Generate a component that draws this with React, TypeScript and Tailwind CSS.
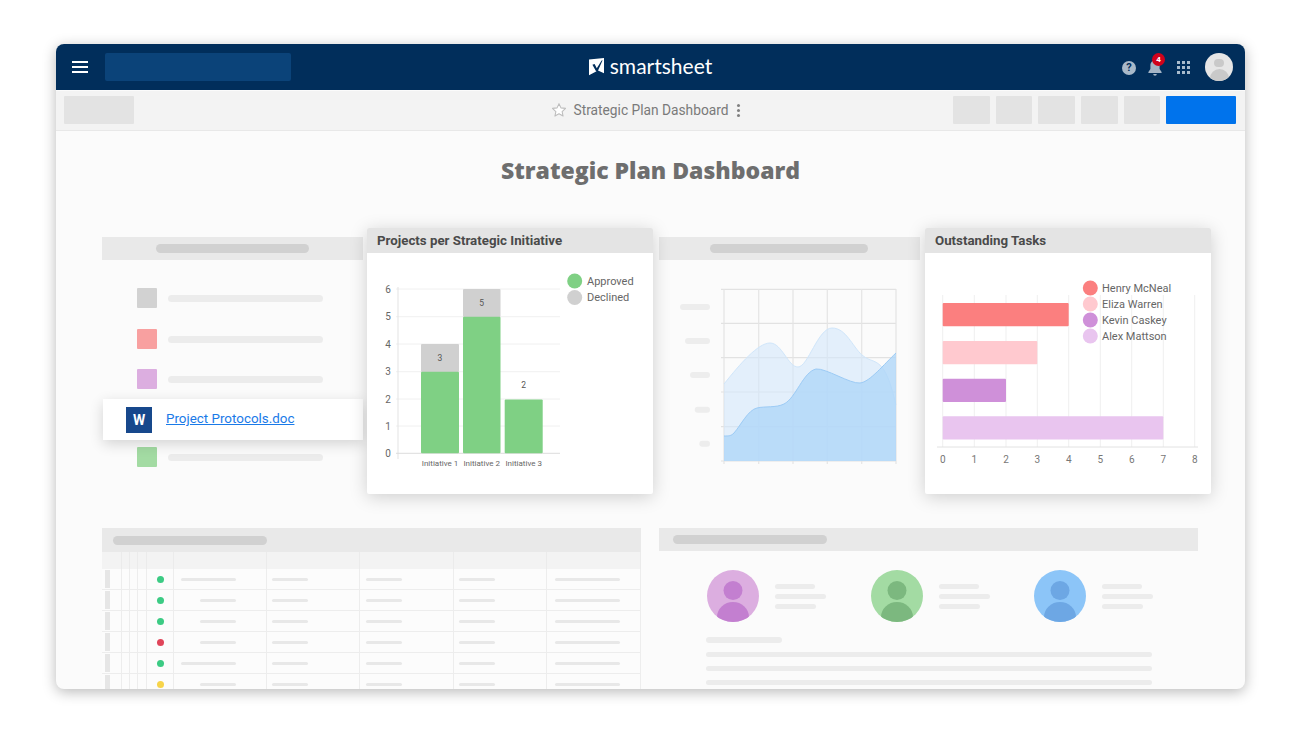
import React from 'react'

const TABLE_COLS = 'grid grid-cols-[20px_8px_8px_9px_27px_93px_93px_94px_93px_94px]'

const TABLE_ROWS = [
  { dot: 'bg-[#3ccb84]', wide: true },
  { dot: 'bg-[#3ccb84]', wide: false },
  { dot: 'bg-[#3ccb84]', wide: false },
  { dot: 'bg-[#e0455a]', wide: false },
  { dot: 'bg-[#3ccb84]', wide: true },
  { dot: 'bg-[#f7d44a]', wide: false },
]

const PEOPLE = [
  { bg: '#dcaee0', fg: '#c37fd0' },
  { bg: '#a3dba3', fg: '#7cb87f' },
  { bg: '#8cc5f8', fg: '#6da7e4' },
]

const LIGHT_CURVE = 'M724 384C740 364 758 343 770 343C782 343 788 367 798 367C808 367 818 328 832 328C846 328 852 346 862 355C870 362 877 359 884 370C890 380 893 393 896 405'
const BLUE_CURVE = 'M724 436C729 436 731 436 734 433C741 425 748 410 757 408C765 406 776 408 784 404C796 398 803 372 816 369C826 368 850 384 860 383C870 382 884 364 896 353'

function Avatar({ bg, fg, size }: { bg: string; fg: string; size: number }): React.ReactElement {
  return (
    <svg width={size} height={size} viewBox="0 0 52 52" className="shrink-0" aria-hidden="true">
      <clipPath id={`clip-${bg.slice(1)}`}>
        <circle cx="26" cy="26" r="26" />
      </clipPath>
      <circle cx="26" cy="26" r="26" fill={bg} />
      <circle cx="26" cy="20.5" r="9.5" fill={fg} />
      <ellipse cx="26" cy="47" rx="16" ry="15" fill={fg} clipPath={`url(#clip-${bg.slice(1)})`} />
    </svg>
  )
}

function SheetLogo(): React.ReactElement {
  return (
    <svg width="16" height="18" viewBox="0 0 16 18" aria-hidden="true">
      <path d="M0 1.6 15 0v15.2L9 12.4 0 17.2z" fill="#fff" />
      <path d="M3.4 6.8 5.6 6l2.2 4.2L12.6 2.4l1-.1-5 11.2h-1.4z" fill="#012e5b" />
    </svg>
  )
}

function Bell(): React.ReactElement {
  return (
    <svg width="16" height="18" viewBox="0 0 16 18" fill="#a3b4c6" aria-hidden="true">
      <path d="M8 1.5c-3 0-4.6 2.3-4.6 5v3.6L1.4 13v1h13.2v-1l-2-2.9V6.5c0-2.7-1.6-5-4.6-5z" />
      <path d="M6.2 15h3.6a1.8 1.8 0 0 1-3.6 0z" />
    </svg>
  )
}

function AppGrid(): React.ReactElement {
  return (
    <div className="grid grid-cols-3 gap-[2px]">
      {Array.from({ length: 9 }).map((_, i) => (
        <span key={i} className="w-[3px] h-[3px] bg-[#a9bbcc]" />
      ))}
    </div>
  )
}

function TopBar(): React.ReactElement {
  return (
    <header className="h-[46px] bg-[#012e5b] grid grid-cols-[1fr_auto_1fr] items-center">
      <div className="flex items-center pl-[16px]">
        <div className="flex flex-col gap-[3px] w-[16px]">
          <span className="h-[2px] bg-white" />
          <span className="h-[2px] bg-white" />
          <span className="h-[2px] bg-white" />
        </div>
        <div className="ml-[17px] w-[186px] h-[28px] rounded-[2px] bg-[#0b4379]" />
      </div>
      <div className="flex items-center gap-[5px]">
        <SheetLogo />
        <span className="-mt-[3px] font-['Lato',sans-serif] text-[21px] leading-none text-white">smartsheet</span>
      </div>
      <div className="flex items-center justify-end pr-[12px]">
        <span className="w-[14px] h-[14px] mt-[2px] rounded-full bg-[#a9b9c9] text-[#012e5b] text-[11px] font-bold leading-[14px] text-center">?</span>
        <div className="relative ml-[11px] mt-[2px]">
          <Bell />
          <span className="absolute -top-[6px] left-[5px] w-[13px] h-[13px] rounded-full bg-[#d0021b] text-white text-[8px] font-bold leading-[13px] text-center">4</span>
        </div>
        <div className="ml-[14px] mt-[1px]">
          <AppGrid />
        </div>
        <div className="ml-[15px] w-[28px] h-[28px] rounded-full bg-[#e6e6e6] overflow-hidden flex flex-col items-center">
          <span className="mt-[6px] w-[10px] h-[10px] rounded-full bg-[#c9c9c9]" />
          <span className="mt-[2px] w-[19px] h-[14px] rounded-t-full bg-[#c9c9c9]" />
        </div>
      </div>
    </header>
  )
}

function Toolbar(): React.ReactElement {
  return (
    <div className="h-[40px] mt-[1px] bg-[#f3f3f3] border-b border-[#e8e8e8] grid grid-cols-[1fr_auto_1fr] items-start pt-[5px]">
      <div className="pl-[8px]">
        <div className="w-[70px] h-[28px] rounded-[1px] bg-[#e3e3e3]" />
      </div>
      <div className="flex items-center h-[28px] pr-[11px] text-[13.75px] text-[#7a7a7a]">
        <svg width="16" height="16" viewBox="0 0 24 24" fill="#fff" stroke="#bdbdbd" strokeWidth="1.6" strokeLinejoin="round" aria-hidden="true">
          <path d="M12 2.5l2.9 6.3 6.9.8-5.1 4.7 1.4 6.8-6.1-3.4-6.1 3.4 1.4-6.8-5.1-4.7 6.9-.8z" />
        </svg>
        <span className="ml-[7px]">Strategic Plan Dashboard</span>
        <div className="ml-[8px] flex flex-col gap-[2px]">
          <span className="w-[3px] h-[3px] rounded-full bg-[#808080]" />
          <span className="w-[3px] h-[3px] rounded-full bg-[#808080]" />
          <span className="w-[3px] h-[3px] rounded-full bg-[#808080]" />
        </div>
      </div>
      <div className="flex justify-end pr-[9px] gap-[6px]">
        <div className="w-[37px] h-[28px] rounded-[1px] bg-[#e3e3e3]" />
        <div className="w-[36px] h-[28px] rounded-[1px] bg-[#e3e3e3]" />
        <div className="w-[37px] h-[28px] rounded-[1px] bg-[#e3e3e3]" />
        <div className="w-[37px] h-[28px] rounded-[1px] bg-[#e3e3e3]" />
        <div className="w-[36px] h-[28px] rounded-[1px] bg-[#e3e3e3]" />
        <div className="w-[70px] h-[28px] rounded-[1px] bg-[#0073ec]" />
      </div>
    </div>
  )
}

function PanelHeader({ pillClass }: { pillClass: string }): React.ReactElement {
  return (
    <div className="h-[23px] bg-[#e9e9e9] flex items-center">
      <div className={`h-[9px] rounded-full bg-[#d1d1d1] ${pillClass}`} />
    </div>
  )
}

function LegendRow({ square }: { square: string }): React.ReactElement {
  return (
    <div className="flex items-center pl-[35px]">
      <span className={`w-[20px] h-[20px] rounded-[1px] ${square}`} />
      <span className="ml-[11px] w-[155px] h-[7px] rounded-full bg-[#ececec]" />
    </div>
  )
}

function LeftPanel(): React.ReactElement {
  return (
    <section className="w-[261px] mt-[9px] shrink-0">
      <PanelHeader pillClass="w-[153px] ml-[54px]" />
      <div className="pt-[28px]">
        <LegendRow square="bg-[#d2d2d2]" />
        <div className="mt-[21px]"><LegendRow square="bg-[#f8a0a0]" /></div>
        <div className="mt-[20px]"><LegendRow square="bg-[#dcaee0]" /></div>
        <div className="relative z-10 mt-[10px] ml-[1px] h-[41px] bg-white shadow-[0_4px_14px_rgba(0,0,0,0.16)] flex items-center pl-[23px]">
          <span className="w-[26px] h-[26px] bg-[#17488c] text-white text-[14px] font-bold leading-[26px] text-center">W</span>
          <a className="ml-[14px] text-[13.4px] text-[#1a7ae8] underline">Project Protocols.doc</a>
        </div>
        <div className="mt-[7px]"><LegendRow square="bg-[#a3dba3]" /></div>
      </div>
    </section>
  )
}

function ChartCard({ title, children }: { title: string; children: React.ReactNode }): React.ReactElement {
  return (
    <section className="relative z-10 w-[286px] h-[266px] shrink-0 bg-white rounded-[2px] shadow-[0_3px_18px_rgba(0,0,0,0.18)] overflow-hidden">
      <h2 className="h-[25px] bg-[#e4e4e4] pl-[10px] text-[13.3px] font-bold leading-[25px] text-[#4a4a4a]">{title}</h2>
      {children}
    </section>
  )
}

// viewBox uses page coordinates, easier to read against the screenshot
function InitiativeChart(): React.ReactElement {
  const ys = [453.3, 426, 399, 371.7, 344, 316.7, 289]
  return (
    <svg width="286" height="241" viewBox="367 253 286 241" className="block font-['Roboto',sans-serif]">
      {ys.slice(1).map((y) => (
        <line key={y} x1="396" x2="560" y1={y} y2={y} stroke="#f0f0f0" strokeWidth="1" />
      ))}
      <line x1="398" x2="398" y1="287" y2="459" stroke="#e3e3e3" strokeWidth="1" />
      <line x1="396" x2="560" y1="453.3" y2="453.3" stroke="#dcdcdc" strokeWidth="1" />
      {ys.map((y, i) => (
        <text key={i} x="388" y={y + 3.5} fontSize="10" fill="#666" textAnchor="middle">{i}</text>
      ))}
      <rect x="421" y="344" width="38" height="28" rx="1" fill="#d0d0d0" />
      <rect x="421" y="371.7" width="38" height="81.6" rx="1" fill="#7fd084" />
      <rect x="463" y="289" width="37.5" height="28" rx="1" fill="#d0d0d0" />
      <rect x="463" y="316.7" width="37.5" height="136.6" rx="1" fill="#7fd084" />
      <rect x="504.7" y="399.5" width="38" height="53.8" rx="1" fill="#7fd084" />
      <text x="440" y="360.5" fontSize="8.5" fill="#555" textAnchor="middle">3</text>
      <text x="481.7" y="306" fontSize="8.5" fill="#555" textAnchor="middle">5</text>
      <text x="523.7" y="388" fontSize="8.5" fill="#555" textAnchor="middle">2</text>
      <text x="440" y="466" fontSize="8" fill="#666" textAnchor="middle">Initiative 1</text>
      <text x="481.7" y="466" fontSize="8" fill="#666" textAnchor="middle">Initiative 2</text>
      <text x="523.7" y="466" fontSize="8" fill="#666" textAnchor="middle">Initiative 3</text>
      <circle cx="574.7" cy="281" r="7.5" fill="#7fd084" />
      <circle cx="574.7" cy="297.5" r="7.5" fill="#d0d0d0" />
      <text x="587" y="285" fontSize="11" fill="#666">Approved</text>
      <text x="587" y="301" fontSize="11" fill="#666">Declined</text>
    </svg>
  )
}

function AreaPanel(): React.ReactElement {
  const vx = [724, 758.7, 793, 827.3, 861.7, 896]
  const hy = [289.3, 323.3, 357.7, 392, 426.7, 461]
  const pills = [
    { y: 304, x: 680 },
    { y: 338, x: 685 },
    { y: 372, x: 690 },
    { y: 406.7, x: 694.7 },
    { y: 440.7, x: 699.3 },
  ]
  return (
    <section className="w-[261px] mt-[9px] ml-[6px] shrink-0">
      <PanelHeader pillClass="w-[158px] ml-[51px]" />
      <svg width="261" height="210" viewBox="659 260 261 210" className="block">
        {pills.map((p) => (
          <rect key={p.y} x={p.x} y={p.y} width={710 - p.x} height="6" rx="3" fill="#ededed" />
        ))}
        {hy.map((y) => (
          <line key={y} x1="721" x2="896" y1={y} y2={y} stroke="#e2e2e2" strokeWidth="1.2" />
        ))}
        {vx.map((x) => (
          <line key={x} x1={x} x2={x} y1="289" y2="464" stroke="#e5e5e5" strokeWidth="1.2" />
        ))}
        <path d={`${LIGHT_CURVE}L896 461L724 461Z`} fill="#d3e7fa" fillOpacity="0.62" />
        <path d={LIGHT_CURVE} fill="none" stroke="#d0e6fa" />
        <path d={`${BLUE_CURVE}L896 461L724 461Z`} fill="#aed6f8" fillOpacity="0.78" />
        <path d={BLUE_CURVE} fill="none" stroke="#9ccbf5" />
      </svg>
    </section>
  )
}

function TasksChart(): React.ReactElement {
  const vx = [942.7, 974.3, 1006, 1037.3, 1068.7, 1100.3, 1131.7, 1163.3, 1194.7]
  const bars = [
    { y: 303, w: 126, fill: '#fb7f7f' },
    { y: 341, w: 94.6, fill: '#ffc9cf' },
    { y: 378.7, w: 63.3, fill: '#cf90d9' },
    { y: 416.3, w: 220.6, fill: '#e9c5ef' },
  ]
  const legend = [
    { name: 'Henry McNeal', fill: '#fb7f7f', y: 288 },
    { name: 'Eliza Warren', fill: '#ffc9cf', y: 304 },
    { name: 'Kevin Caskey', fill: '#cf90d9', y: 320 },
    { name: 'Alex Mattson', fill: '#e9c5ef', y: 336 },
  ]
  return (
    <svg width="286" height="241" viewBox="925 253 286 241" className="block font-['Roboto',sans-serif]">
      {vx.map((x, i) => (
        <g key={x}>
          <line x1={x} x2={x} y1="295" y2="447" stroke="#efefef" strokeWidth="1" />
          <text x={x} y="463" fontSize="10" fill="#777" textAnchor="middle">{i}</text>
        </g>
      ))}
      <line x1="937" x2="1198" y1="447" y2="447" stroke="#e2e2e2" strokeWidth="1" />
      {bars.map((b) => (
        <rect key={b.y} x="942.7" y={b.y} width={b.w} height="23.3" rx="1" fill={b.fill} />
      ))}
      {legend.map((l) => (
        <g key={l.name}>
          <circle cx="1090.3" cy={l.y} r="7.5" fill={l.fill} />
          <text x="1102" y={l.y + 4} fontSize="11" fill="#666">{l.name}</text>
        </g>
      ))}
    </svg>
  )
}

function TablePanel(): React.ReactElement {
  return (
    <section className="w-[539px] shrink-0">
      <div className="h-[24px] bg-[#e9e9e9] flex items-center pl-[11px]">
        <div className="w-[154px] h-[9px] rounded-full bg-[#d1d1d1]" />
      </div>
      <div className={`${TABLE_COLS} h-[17px] bg-[#f3f3f3]`}>
        {Array.from({ length: 10 }).map((_, i) => (
          <div key={i} className="border-r border-[#ebebeb]" />
        ))}
      </div>
      {TABLE_ROWS.map((row, i) => (
        <div key={i} className={`${TABLE_COLS} h-[21px] bg-[#fcfcfc] border-b border-[#ededed]`}>
          <div className="border-r border-[#ededed] pl-[3px] py-[1px]">
            <div className="w-[5px] h-full bg-[#e6e6e6]" />
          </div>
          <div className="border-r border-[#ededed]" />
          <div className="border-r border-[#ededed]" />
          <div className="border-r border-[#ededed]" />
          <div className="border-r border-[#ededed] flex items-center pl-[10px]">
            <span className={`w-[7px] h-[7px] rounded-full ${row.dot}`} />
          </div>
          <div className="border-r border-[#ededed] flex items-center justify-end pr-[30px]">
            <span className={`h-[3px] rounded-full bg-[#e8e8e8] ${row.wide ? 'w-[55px]' : 'w-[36px]'}`} />
          </div>
          <div className="border-r border-[#ededed] flex items-center pl-[5px]">
            <span className="h-[3px] w-[36px] rounded-full bg-[#e8e8e8]" />
          </div>
          <div className="border-r border-[#ededed] flex items-center pl-[6px]">
            <span className="h-[3px] w-[36px] rounded-full bg-[#e8e8e8]" />
          </div>
          <div className="border-r border-[#ededed] flex items-center pl-[5px]">
            <span className="h-[3px] w-[36px] rounded-full bg-[#e8e8e8]" />
          </div>
          <div className="border-r border-[#ededed] flex items-center pl-[8px]">
            <span className="h-[3px] w-[65px] rounded-full bg-[#e8e8e8]" />
          </div>
        </div>
      ))}
    </section>
  )
}

function PeoplePanel(): React.ReactElement {
  return (
    <section className="w-[539px] ml-[18px] shrink-0">
      <div className="h-[23px] bg-[#e9e9e9] flex items-center pl-[14px]">
        <div className="w-[154px] h-[9px] rounded-full bg-[#d1d1d1]" />
      </div>
      <div className="flex pt-[19px] pl-[48px]">
        {PEOPLE.map((p) => (
          <div key={p.bg} className="flex items-center w-[163.5px] shrink-0">
            <Avatar bg={p.bg} fg={p.fg} size={52} />
            <div className="ml-[16px] flex flex-col gap-[5px] shrink-0">
              <span className="w-[40px] h-[5px] rounded-full bg-[#ececec]" />
              <span className="w-[51px] h-[5px] rounded-full bg-[#ececec]" />
              <span className="w-[41px] h-[5px] rounded-full bg-[#ececec]" />
            </div>
          </div>
        ))}
      </div>
      <div className="pl-[47px] pt-[15px]">
        <div className="w-[76px] h-[6px] rounded-full bg-[#ececec]" />
        <div className="mt-[9px] w-[446px] h-[5px] rounded-full bg-[#ececec]" />
        <div className="mt-[9px] w-[446px] h-[5px] rounded-full bg-[#ececec]" />
        <div className="mt-[9px] w-[446px] h-[5px] rounded-full bg-[#ececec]" />
      </div>
    </section>
  )
}

export default function App(): React.ReactElement {
  return (
    <div className="w-[1300px] h-[732px] bg-white pt-[44px] pl-[56px] overflow-hidden font-['Roboto',sans-serif]">
      <div className="w-[1189px] h-[645px] rounded-[8px] bg-[#fbfbfb] shadow-[0_3px_14px_rgba(0,0,0,0.28)] overflow-hidden">
        <TopBar />
        <Toolbar />
        <main className="pl-[46px]">
          <h1 className="h-[97px] -ml-[46px] pt-[22px] text-center font-['Open_Sans',sans-serif] text-[23px] font-extrabold leading-[34px] text-[#6e6e6e]">
            Strategic Plan Dashboard
          </h1>
          <div className="flex h-[300px] items-start">
            <LeftPanel />
            <div className="ml-[4px]">
              <ChartCard title="Projects per Strategic Initiative">
                <InitiativeChart />
              </ChartCard>
            </div>
            <AreaPanel />
            <div className="ml-[5px]">
              <ChartCard title="Outstanding Tasks">
                <TasksChart />
              </ChartCard>
            </div>
          </div>
          <div className="flex">
            <TablePanel />
            <PeoplePanel />
          </div>
        </main>
      </div>
    </div>
  )
}
